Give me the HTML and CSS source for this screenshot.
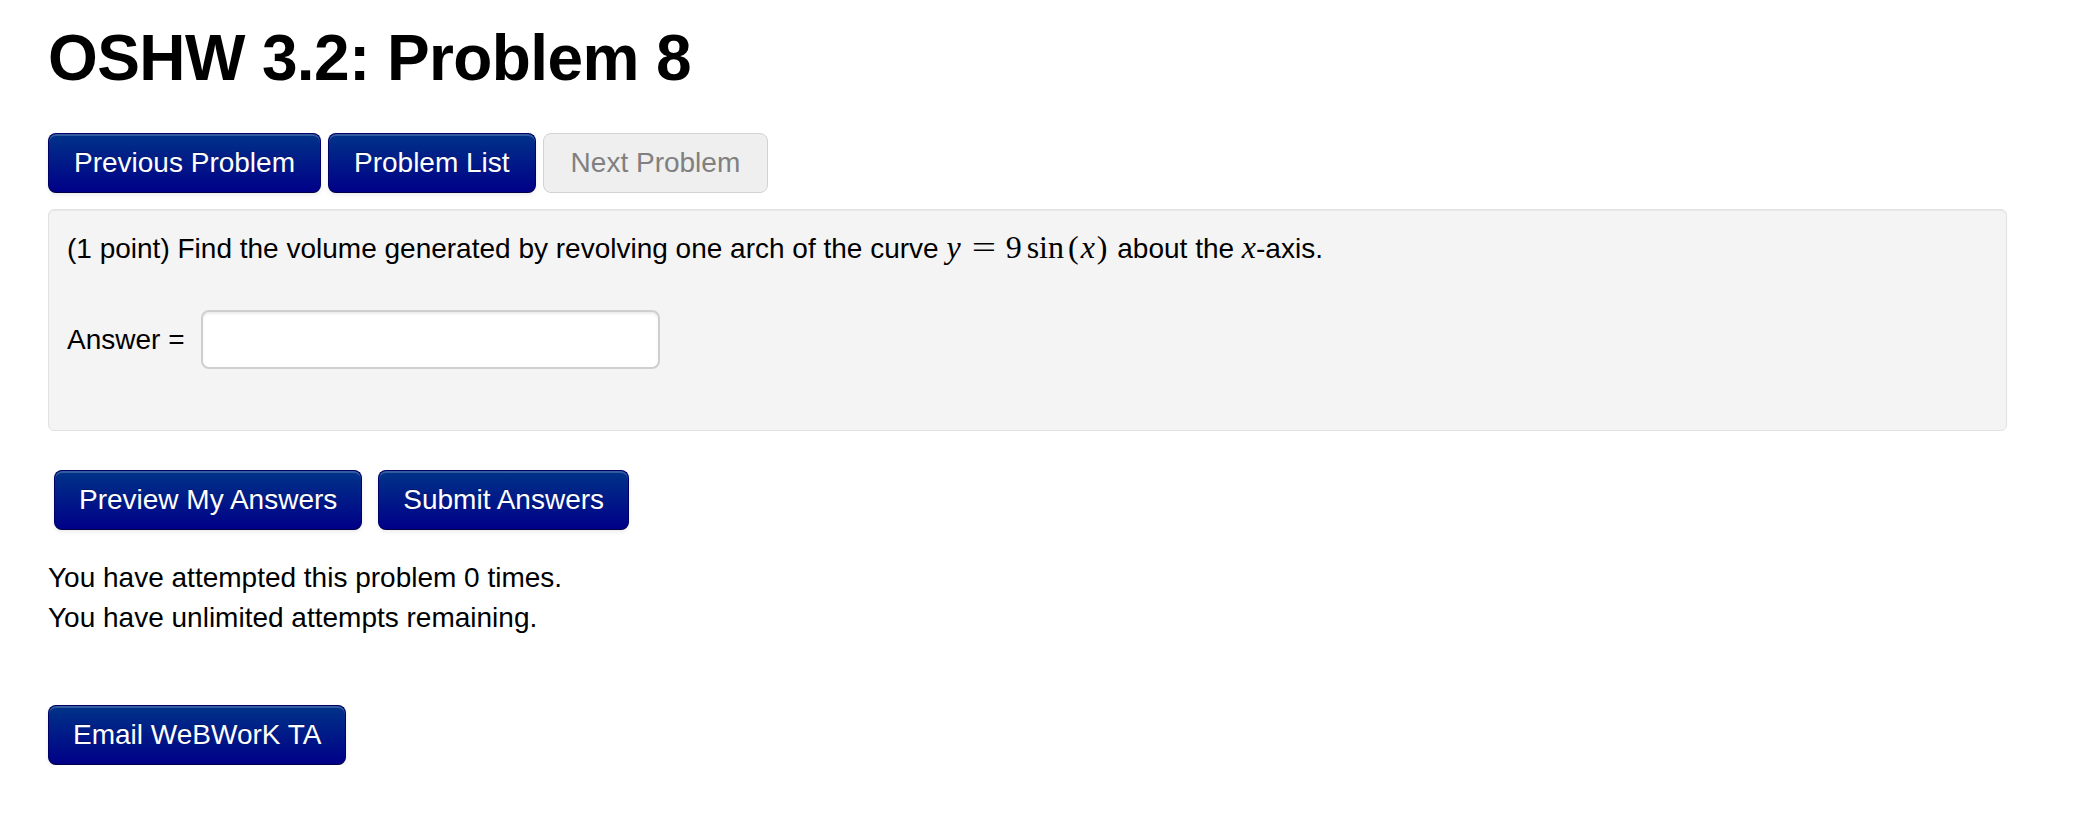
FILE: index.html
```html
<!DOCTYPE html>
<html lang="en">
<head>
    <meta charset="UTF-8">
    <meta name="viewport" content="width=device-width, initial-scale=1.0">
    <title>OSHW 3.2: Problem 8</title>
    <link rel="stylesheet" href="styles.css">
</head>
<body>
    <h1 class="problem-title">OSHW 3.2: Problem 8</h1>

    <div class="problem-nav">
        <a class="btn btn-primary" href="#">Previous Problem</a>
        <a class="btn btn-primary" href="#">Problem List</a>
        <span class="btn btn-disabled">Next Problem</span>
    </div>

    <div class="problem-well">
        <p class="problem-text">(1 point) Find the volume generated by revolving one arch of the curve <span class="math"><i>y</i><span class="op">=</span>9<span class="fn">sin</span><span class="paren">(</span><i>x</i><span class="paren">)</span></span> about the <span class="math"><i>x</i></span>-axis.</p>
        <div class="answer-row">
            <label for="answer">Answer =</label>
            <input type="text" id="answer" class="answer-input">
        </div>
    </div>

    <div class="submit-buttons">
        <button class="btn btn-primary">Preview My Answers</button>
        <button class="btn btn-primary">Submit Answers</button>
    </div>

    <div class="attempts">
        <p>You have attempted this problem 0 times.</p>
        <p>You have unlimited attempts remaining.</p>
    </div>

    <div class="email-ta">
        <button class="btn btn-primary">Email WeBWorK TA</button>
    </div>
</body>
</html>
```

FILE: styles.css
```css
body {
    margin: 0;
    padding: 18px 48px 0;
    font-family: 'Liberation Sans', Arial, sans-serif;
    font-size: 28px;
    line-height: 40px;
    color: #000;
    background: #fff;
}

p {
    margin: 0;
}

.problem-title {
    margin: 0;
    font-size: 64px;
    line-height: 80px;
    font-weight: bold;
    letter-spacing: -0.6px;
}

.problem-nav {
    display: flex;
    gap: 7px;
    margin-top: 35px;
}

.btn {
    display: inline-block;
    padding: 9px 24px;
    font-family: inherit;
    font-size: 28px;
    line-height: 40px;
    text-decoration: none;
    border: 1px solid #ccc;
    border-radius: 8px;
    cursor: pointer;
}

.btn-primary {
    color: #fff;
    background-color: #002288;
    background-image: linear-gradient(to bottom, #003388, #000088);
    border-color: #000066 #000066 #000044;
    text-shadow: 0 -1px 0 rgba(0, 0, 0, 0.25);
    box-shadow: inset 0 2px 0 rgba(255, 255, 255, 0.2), 0 2px 4px rgba(0, 0, 0, 0.08);
}

.problem-nav .btn {
    padding: 9px 25px;
}

.problem-nav .btn-disabled {
    padding: 9px 27px;
}

.btn-disabled {
    color: #808080;
    background-color: #efefef;
    border-color: #d2d2d2;
    cursor: default;
}

.problem-well {
    margin: 16px 40px 0 0;
    padding: 17px 18px 61px;
    background-color: #f4f4f4;
    border: 1px solid #e2e2e2;
    border-radius: 6px;
    box-shadow: inset 0 1px 1px rgba(0, 0, 0, 0.05);
}

.math {
    font-family: 'Liberation Serif', 'Times New Roman', serif;
    font-size: 32px;
}

.math i {
    font-style: italic;
}

.math .op {
    display: inline-block;
    margin: 0 13px 0 14px;
    transform: scaleX(1.35);
}

.math .fn {
    margin: 0 2px 0 5px;
}

.math .paren {
    margin: 0 2px;
}

.answer-row {
    display: flex;
    align-items: center;
    gap: 16px;
    margin-top: 41px;
}

.answer-input {
    width: 459px;
    height: 59px;
    box-sizing: border-box;
    padding: 8px 12px;
    font-family: inherit;
    font-size: 28px;
    background: #fff;
    border: 2px solid #cfcfcf;
    border-radius: 8px;
    box-shadow: inset 0 2px 2px rgba(0, 0, 0, 0.075);
}

.submit-buttons {
    display: flex;
    gap: 16px;
    margin: 39px 0 0 6px;
}

.attempts {
    margin-top: 28px;
}

.email-ta {
    margin-top: 67px;
}
```
